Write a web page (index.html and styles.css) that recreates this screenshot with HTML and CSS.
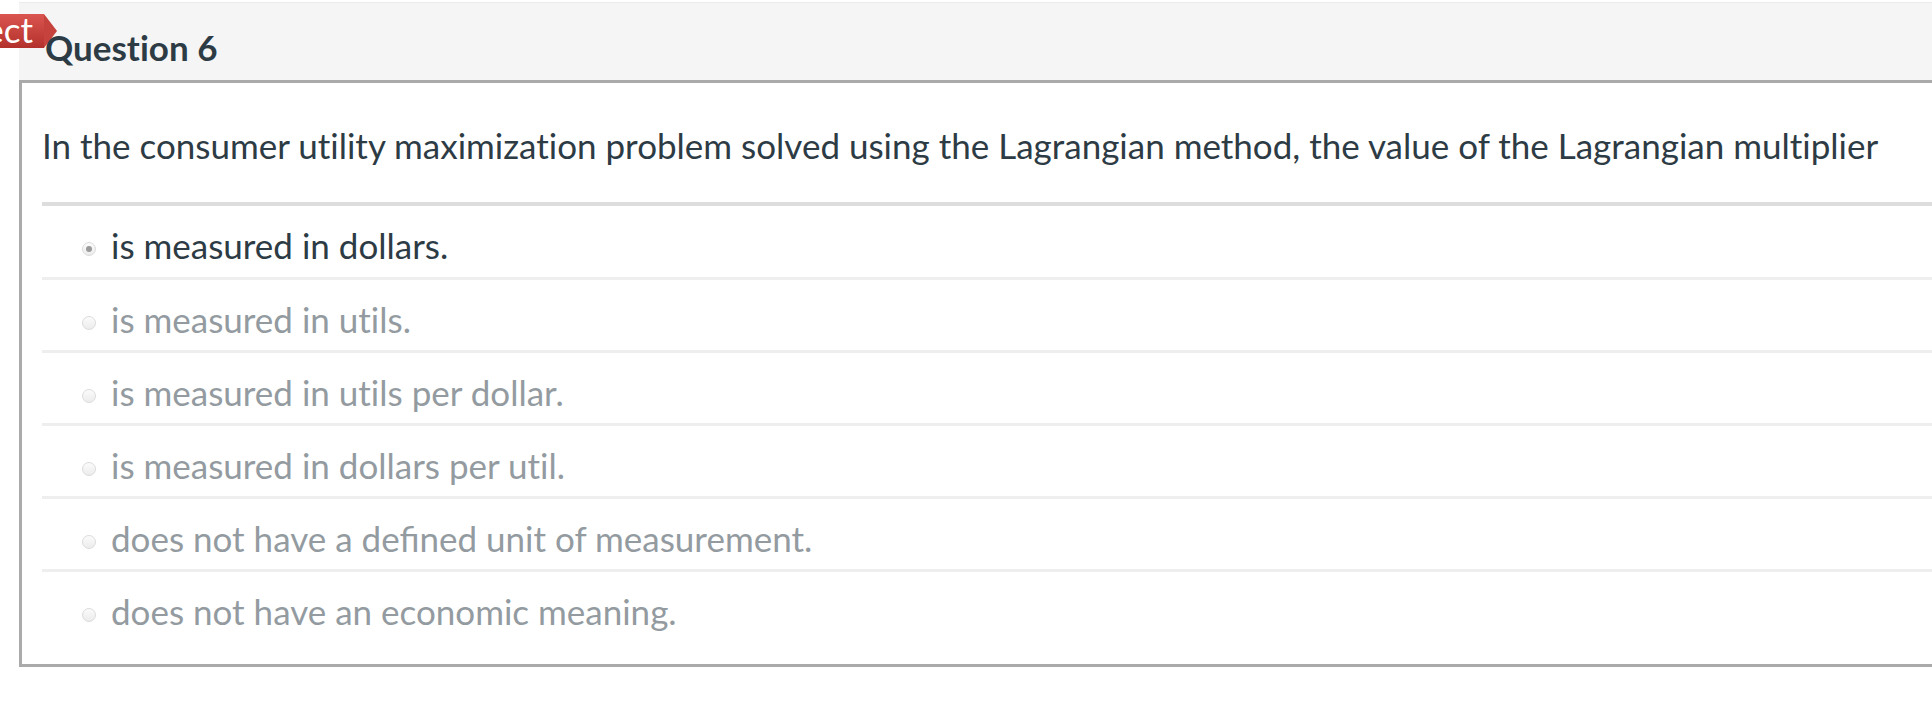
FILE: index.html
```html
<!DOCTYPE html>
<html>
<head>
<meta charset="utf-8">
<link rel="stylesheet" href="styles.css">
</head>
<body>
<div class="badge-anchor">
  <div class="badge"><span class="badge-text">Incorrect</span><span class="badge-arrow"></span></div>
</div>
<div class="question">
  <div class="q-header"><span class="q-title">Question 6</span></div>
  <div class="q-card">
    <div class="q-text">In the consumer utility maximization problem solved using the Lagrangian method, the value of the Lagrangian multiplier</div>
    <div class="answers">
      <div class="answer selected"><span class="radio"><span class="dot"></span></span><span class="label">is measured in dollars.</span></div>
      <div class="answer"><span class="radio"></span><span class="label">is measured in utils.</span></div>
      <div class="answer"><span class="radio"></span><span class="label">is measured in utils per dollar.</span></div>
      <div class="answer"><span class="radio"></span><span class="label">is measured in dollars per util.</span></div>
      <div class="answer"><span class="radio"></span><span class="label">does not have a <span class="lig">defined</span> unit of measurement.</span></div>
      <div class="answer last"><span class="radio"></span><span class="label">does not have an economic meaning.</span></div>
    </div>
  </div>
</div>
</body>
</html>
```
FILE: styles.css
```css
html, body {
  margin: 0;
  padding: 0;
  background: #ffffff;
  overflow: hidden;
}
body {
  font-family: Lato, "Open Sans", "Liberation Sans", sans-serif;
  font-variant-ligatures: no-common-ligatures;
  color: #2d3b45;
  position: relative;
  width: 1932px;
  height: 708px;
}
.lig {
  font-variant-ligatures: common-ligatures;
}
.badge-anchor {
  position: absolute;
  left: 0;
  top: 14px;
  width: 44px;
  height: 34px;
  display: flex;
  justify-content: flex-end;
  z-index: 1;
}
.badge {
  flex-shrink: 0;
  display: flex;
  height: 34px;
  position: relative;
}
.badge-text {
  background: linear-gradient(#db5550, #b3312c);
  color: #ffffff;
  font-size: 35px;
  line-height: 31px;
  padding: 0 11px 3px 12px;
  white-space: nowrap;
  border-radius: 3px 0 0 3px;
}
.badge-arrow {
  position: absolute;
  right: -13px;
  top: 0;
  width: 0;
  height: 0;
  border-top: 17px solid transparent;
  border-bottom: 17px solid transparent;
  border-left: 13px solid #c5423d;
}
.question {
  margin: 2px 0 0 19px;
  width: 2000px;
}
.q-header {
  background: #f5f5f5;
  border-top: 1px solid #ebebeb;
  height: 77px;
  display: flex;
  align-items: center;
  padding-left: 26px;
}
.q-title {
  position: relative;
  z-index: 2;
  font-size: 35px;
  font-weight: 700;
  color: #2d3b45;
  padding-top: 11px;
}
.q-card {
  border: 3px solid #aaaaaa;
  border-right: none;
  padding: 0 0 22px 20px;
}
.q-text {
  font-size: 35px;
  line-height: 48px;
  padding: 38px 0 33px 0;
  border-bottom: 4px solid #dddddd;
}
.answer {
  display: flex;
  align-items: flex-start;
  height: 70px;
  border-bottom: 3px solid #eeeeee;
  padding-left: 40px;
  color: #939ba1;
}
.answer.selected {
  color: #2d3b45;
  height: 71px;
}
.answer.last {
  border-bottom: none;
}
.radio {
  width: 12px;
  height: 12px;
  margin-top: 36px;
  border-radius: 50%;
  border: 1px solid #dcdcdc;
  background: linear-gradient(#fbfbfb, #ececec);
  display: flex;
  align-items: center;
  justify-content: center;
  margin-right: 15px;
  flex-shrink: 0;
}
.dot {
  width: 6px;
  height: 6px;
  border-radius: 50%;
  background: #9a9a9a;
}
.label {
  font-size: 35px;
  line-height: 64px;
  padding-top: 7px;
  white-space: nowrap;
}
```
